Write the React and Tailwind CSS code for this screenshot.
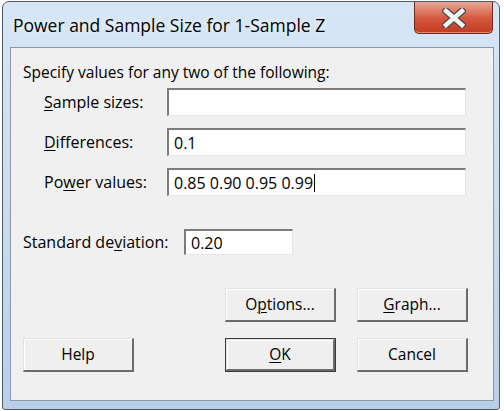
import React from "react";

const FONT = { fontFamily: '"Open Sans", "Noto Sans", sans-serif' };

function U({ children }) {
  return <span className="underline underline-offset-[2px] decoration-[1px]">{children}</span>;
}

function Field({ value, width, height, caret }) {
  return (
    <div
      className={`${width} ${height} bg-white border-t-2 border-l-2 border-b border-r border-t-[#7c7c7c] border-l-[#7c7c7c] border-b-[#e6e6e6] border-r-[#e6e6e6] flex items-center pl-[5px] text-[16px] text-black`}
    >
      {value}
      {caret && <span className="inline-block w-[1px] h-[18px] bg-black ml-[1px]" />}
    </div>
  );
}

function Btn({ children, isDefault }) {
  return (
    <div
      className={`w-[111px] h-[34px] flex ${isDefault ? "border border-[#3a3a3a]" : ""}`}
    >
      <div className="flex-1 flex items-center justify-center bg-[#efefef] border-t border-l border-b-2 border-r-2 border-t-[#e2e2e2] border-l-[#e2e2e2] border-b-[#6c6c6c] border-r-[#6c6c6c] shadow-[inset_1px_1px_0_#ffffff] text-[15.5px] text-black">
        {children}
      </div>
    </div>
  );
}

function Row({ label, value, caret }) {
  return (
    <div className="flex items-center h-[28px]">
      <div className="w-[123px] text-[16px] text-black">{label}</div>
      <Field value={value} width="w-[299px]" height="h-[28px]" caret={caret} />
    </div>
  );
}

export default function App() {
  return (
    <div className="w-[504px] h-[411px] bg-white pt-[1px] pl-[2px]" style={FONT}>
      <div className="w-[498px] h-[409px] rounded-t-[7px] rounded-b-[3px] border border-[#4f5b6a] bg-gradient-to-b from-[#d6e6f6] via-[#c9dcf1] to-[#b7cfe9] flex flex-col">
        <div className="h-[45px] flex items-start justify-between">
          <div className="pl-[10px] pt-[10px] text-[17.5px] text-black [text-shadow:0_0_6px_#ffffff]">
            Power and Sample Size for 1-Sample Z
          </div>
          <div className="mr-[6px] w-[79px] h-[32px] rounded-b-[5px] border border-t-0 border-[#6b2a20] bg-gradient-to-b from-[#e9a898] via-[#d55a40] to-[#c23a1f] flex items-center justify-center shadow-[inset_0_-1px_0_#e58a72]">
            <svg width="24" height="20" viewBox="0 0 24 20">
              <path d="M4 3 L20 17 M20 3 L4 17" stroke="#4a4a4a" strokeWidth="7" strokeLinecap="square" />
              <path d="M4 3 L20 17 M20 3 L4 17" stroke="#f4f4f4" strokeWidth="4.5" strokeLinecap="square" />
            </svg>
          </div>
        </div>
        <div className="ml-[7px] w-[484px] h-[354px] bg-[#f0f0f0] border border-[#8d98a6] flex flex-col">
          <div className="pl-[12px] pt-[13px] text-[15.5px] text-black h-[40px]">
            Specify values for any two of the following:
          </div>
          <div className="pl-[33px] flex flex-col gap-[12px]">
            <Row label={<><U>S</U>ample sizes:</>} value="" />
            <Row label={<><U>D</U>ifferences:</>} value="0.1" />
            <Row label={<>Po<U>w</U>er values:</>} value="0.85 0.90 0.95 0.99" caret />
          </div>
          <div className="pl-[12px] mt-[33px] flex items-center h-[26px]">
            <div className="w-[161px] text-[16px] text-black">
              Standard de<U>v</U>iation:
            </div>
            <Field value="0.20" width="w-[109px]" height="h-[26px]" />
          </div>
          <div className="pl-[214px] mt-[33px] flex gap-[21px]">
            <Btn>O<U>p</U>tions...</Btn>
            <Btn><U>G</U>raph...</Btn>
          </div>
          <div className="pl-[12px] mt-[16px] flex">
            <Btn>Help</Btn>
            <div className="ml-[91px] flex gap-[21px]">
              <Btn isDefault><U>O</U>K</Btn>
              <Btn>Cancel</Btn>
            </div>
          </div>
        </div>
      </div>
    </div>
  );
}
